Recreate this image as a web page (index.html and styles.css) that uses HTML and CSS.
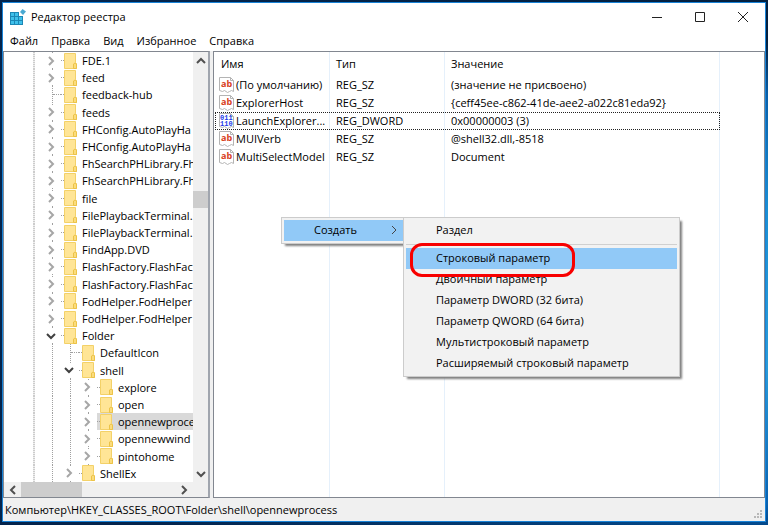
FILE: index.html
```html
<!DOCTYPE html>
<html lang="ru">
<head>
    <meta charset="UTF-8">
    <meta name="viewport" content="width=device-width, initial-scale=1.0">
    <title>Редактор реестра</title>
    <link rel="stylesheet" href="styles.css">
</head>
<body>
    <svg class="sprite" aria-hidden="true">
        <symbol id="folder" viewBox="0 0 13 16">
            <path d="M.5 .5h11v9l1 1v5H.5z" fill="#ffe596" stroke="#f3d168"/>
            <path d="M9.500 15.500v-4.500l1.500-1 1.500 1v4.500z" fill="#fbdc7c" stroke="#ecc348"/>
        </symbol>
        <symbol id="right" viewBox="0 0 10 10">
            <path d="M3 1l4 4-4 4" fill="none" stroke="currentColor"/>
        </symbol>
        <symbol id="down" viewBox="0 0 10 10">
            <path d="M1 3l4 4 4-4" fill="none" stroke="currentColor"/>
        </symbol>
        <symbol id="left" viewBox="0 0 10 10">
            <path d="M7 1L3 5l4 4" fill="none" stroke="currentColor"/>
        </symbol>
        <symbol id="up" viewBox="0 0 10 10">
            <path d="M1 7l4-4 4 4" fill="none" stroke="currentColor"/>
        </symbol>
        <symbol id="page" viewBox="0 0 16 16">
            <path d="M.5 .5h11l3 3v11l-2-1-2 1-2 1-3-2-2 1-3-1z" fill="#fff" stroke="#b4b4b4"/>
            <path d="M11.500 .5v3h3" fill="none" stroke="#b4b4b4"/>
        </symbol>
    </svg>

    <div class="window">
        <header class="title-bar">
            <svg class="app-icon" viewBox="0 0 16 16" aria-hidden="true">
                <path d="M0 3h9v4h4v9H0z" fill="#1c87b5"/>
                <path d="M1 4h3v3H1zM5 4h3v3H5zM1 8h3v3H1zM5 8h3v3H5zM9 8h3v3H9zM1 12h3v3H1zM5 12h3v3H5zM9 12h3v3H9z" fill="#3fc0ea"/>
                <path d="M12.500 0L16 2.500 13 6 10 3z" fill="#4aa9d2"/>
            </svg>
            <h1>Редактор реестра</h1>
            <div class="window-buttons">
                <button aria-label="Свернуть"><svg viewBox="0 0 12 12"><path d="M1 6.500h10"/></svg></button>
                <button aria-label="Развернуть"><svg viewBox="0 0 12 12"><path d="M1.500 1.500h9v9h-9z"/></svg></button>
                <button aria-label="Закрыть"><svg viewBox="0 0 12 12"><path d="M1 1l10 10M11 1L1 11"/></svg></button>
            </div>
        </header>

        <nav class="menu-bar">
            <button>Файл</button>
            <button>Правка</button>
            <button>Вид</button>
            <button>Избранное</button>
            <button>Справка</button>
        </nav>

        <main>
            <section class="tree-pane">
                <ul class="tree">
                    <li class="level1"><button class="toggle" aria-label="Развернуть"><svg><use href="#right"/></svg></button><span class="node"><svg><use href="#folder"/></svg>FDE.1</span></li>
                    <li class="level1"><button class="toggle" aria-label="Развернуть"><svg><use href="#right"/></svg></button><span class="node"><svg><use href="#folder"/></svg>feed</span></li>
                    <li class="level1"><span class="leaf"></span><span class="node"><svg><use href="#folder"/></svg>feedback-hub</span></li>
                    <li class="level1"><button class="toggle" aria-label="Развернуть"><svg><use href="#right"/></svg></button><span class="node"><svg><use href="#folder"/></svg>feeds</span></li>
                    <li class="level1"><button class="toggle" aria-label="Развернуть"><svg><use href="#right"/></svg></button><span class="node"><svg><use href="#folder"/></svg>FHConfig.AutoPlayHa</span></li>
                    <li class="level1"><button class="toggle" aria-label="Развернуть"><svg><use href="#right"/></svg></button><span class="node"><svg><use href="#folder"/></svg>FHConfig.AutoPlayHa</span></li>
                    <li class="level1"><button class="toggle" aria-label="Развернуть"><svg><use href="#right"/></svg></button><span class="node"><svg><use href="#folder"/></svg>FhSearchPHLibrary.Fh</span></li>
                    <li class="level1"><button class="toggle" aria-label="Развернуть"><svg><use href="#right"/></svg></button><span class="node"><svg><use href="#folder"/></svg>FhSearchPHLibrary.Fh</span></li>
                    <li class="level1"><button class="toggle" aria-label="Развернуть"><svg><use href="#right"/></svg></button><span class="node"><svg><use href="#folder"/></svg>file</span></li>
                    <li class="level1"><button class="toggle" aria-label="Развернуть"><svg><use href="#right"/></svg></button><span class="node"><svg><use href="#folder"/></svg>FilePlaybackTerminal.</span></li>
                    <li class="level1"><button class="toggle" aria-label="Развернуть"><svg><use href="#right"/></svg></button><span class="node"><svg><use href="#folder"/></svg>FilePlaybackTerminal.</span></li>
                    <li class="level1"><button class="toggle" aria-label="Развернуть"><svg><use href="#right"/></svg></button><span class="node"><svg><use href="#folder"/></svg>FindApp.DVD</span></li>
                    <li class="level1"><button class="toggle" aria-label="Развернуть"><svg><use href="#right"/></svg></button><span class="node"><svg><use href="#folder"/></svg>FlashFactory.FlashFac</span></li>
                    <li class="level1"><button class="toggle" aria-label="Развернуть"><svg><use href="#right"/></svg></button><span class="node"><svg><use href="#folder"/></svg>FlashFactory.FlashFac</span></li>
                    <li class="level1"><button class="toggle" aria-label="Развернуть"><svg><use href="#right"/></svg></button><span class="node"><svg><use href="#folder"/></svg>FodHelper.FodHelper</span></li>
                    <li class="level1"><button class="toggle" aria-label="Развернуть"><svg><use href="#right"/></svg></button><span class="node"><svg><use href="#folder"/></svg>FodHelper.FodHelper</span></li>
                    <li class="level1"><button class="toggle open" aria-label="Свернуть"><svg><use href="#down"/></svg></button><span class="node"><svg><use href="#folder"/></svg>Folder</span></li>
                    <li class="level2"><span class="leaf"></span><span class="node"><svg><use href="#folder"/></svg>DefaultIcon</span></li>
                    <li class="level2"><button class="toggle open" aria-label="Свернуть"><svg><use href="#down"/></svg></button><span class="node"><svg><use href="#folder"/></svg>shell</span></li>
                    <li class="level3"><button class="toggle" aria-label="Развернуть"><svg><use href="#right"/></svg></button><span class="node"><svg><use href="#folder"/></svg>explore</span></li>
                    <li class="level3"><button class="toggle" aria-label="Развернуть"><svg><use href="#right"/></svg></button><span class="node"><svg><use href="#folder"/></svg>open</span></li>
                    <li class="level3"><button class="toggle" aria-label="Развернуть"><svg><use href="#right"/></svg></button><span class="node selected"><svg><use href="#folder"/></svg>opennewproce</span></li>
                    <li class="level3"><button class="toggle" aria-label="Развернуть"><svg><use href="#right"/></svg></button><span class="node"><svg><use href="#folder"/></svg>opennewwind</span></li>
                    <li class="level3"><button class="toggle" aria-label="Развернуть"><svg><use href="#right"/></svg></button><span class="node"><svg><use href="#folder"/></svg>pintohome</span></li>
                    <li class="level2"><button class="toggle" aria-label="Развернуть"><svg><use href="#right"/></svg></button><span class="node"><svg><use href="#folder"/></svg>ShellEx</span></li>
                </ul>
                <div class="scroll-y">
                    <button aria-label="Вверх"><svg><use href="#up"/></svg></button>
                    <span></span>
                    <span class="thumb"></span>
                    <span></span>
                    <button aria-label="Вниз"><svg><use href="#down"/></svg></button>
                </div>
                <div class="scroll-x">
                    <button aria-label="Влево"><svg><use href="#left"/></svg></button>
                    <span class="thumb"></span>
                    <span></span>
                    <button aria-label="Вправо"><svg><use href="#right"/></svg></button>
                </div>
            </section>

            <section class="list-pane">
                <table>
                    <colgroup>
                        <col class="col-name">
                        <col class="col-type">
                        <col class="col-value">
                    </colgroup>
                    <thead>
                        <tr><th>Имя</th><th>Тип</th><th>Значение</th></tr>
                    </thead>
                    <tbody>
                        <tr>
                            <td><span class="name"><svg viewBox="0 0 16 16"><use href="#page"/><text class="ab" x="2" y="10">ab</text></svg>(По умолчанию)</span></td>
                            <td>REG_SZ</td><td>(значение не присвоено)</td>
                        </tr>
                        <tr>
                            <td><span class="name"><svg viewBox="0 0 16 16"><use href="#page"/><text class="ab" x="2" y="10">ab</text></svg>ExplorerHost</span></td>
                            <td>REG_SZ</td><td>{ceff45ee-c862-41de-aee2-a022c81eda92}</td>
                        </tr>
                        <tr class="focused">
                            <td><span class="name"><svg viewBox="0 0 16 16"><use href="#page"/><text class="bin" x="1" y="7">011</text><text class="bin" x="1" y="13">110</text></svg>LaunchExplorer...</span></td>
                            <td>REG_DWORD</td><td>0x00000003 (3)</td>
                        </tr>
                        <tr>
                            <td><span class="name"><svg viewBox="0 0 16 16"><use href="#page"/><text class="ab" x="2" y="10">ab</text></svg>MUIVerb</span></td>
                            <td>REG_SZ</td><td>@shell32.dll,-8518</td>
                        </tr>
                        <tr>
                            <td><span class="name"><svg viewBox="0 0 16 16"><use href="#page"/><text class="ab" x="2" y="10">ab</text></svg>MultiSelectModel</span></td>
                            <td>REG_SZ</td><td>Document</td>
                        </tr>
                    </tbody>
                </table>
            </section>
        </main>

        <footer>
            <span>Компьютер\HKEY_CLASSES_ROOT\Folder\shell\opennewprocess</span>
            <svg class="grip" viewBox="0 0 9 9" aria-hidden="true">
                <path d="M6 0h2v2H6zM3 3h2v2H3zM6 3h2v2H6zM0 6h2v2H0zM3 6h2v2H3zM6 6h2v2H6z" fill="#b8b8b8"/>
            </svg>
        </footer>
    </div>

    <div class="popup context-menu">
        <button class="active">Создать<svg><use href="#right"/></svg></button>
    </div>
    <div class="popup submenu">
        <button>Раздел</button>
        <hr>
        <button class="active">Строковый параметр</button>
        <button>Двоичный параметр</button>
        <button>Параметр DWORD (32 бита)</button>
        <button>Параметр QWORD (64 бита)</button>
        <button>Мультистроковый параметр</button>
        <button>Расширяемый строковый параметр</button>
    </div>
    <div class="highlight"></div>
</body>
</html>
```
FILE: styles.css
```css
* {
    box-sizing: border-box;
}
body {
    --dots: repeating-linear-gradient(#a0a0a0 0 1px, transparent 1px 2px);
    --dots-light: repeating-linear-gradient(#ccc 0 1px, #eee 1px 2px);
    margin: 0;
    padding: 2px 2px 3px;
    height: 100vh;
    overflow: hidden;
    font-family: "Open Sans", "Noto Sans", sans-serif;
    font-size: 11px;
    color: #000;
    background: linear-gradient(90deg, #04244c 20%, transparent 95%), linear-gradient(#04203f 8%, #0a5fa8 18%, #1b8fd2 40%, #2a9bd8 70%, #0a62b0 96%, #03488a);
}
button {
    margin: 0;
    padding: 0;
    border: none;
    background: none;
    font: inherit;
    color: inherit;
}
svg {
    display: block;
    flex: none;
    width: 10px;
    height: 10px;
}
.sprite {
    position: absolute;
    width: 0;
    height: 0;
}
.window {
    display: flex;
    flex-direction: column;
    height: 100%;
    border: 1px solid #1883d7;
    background-color: #fff;
}

/* title and menu */
.title-bar {
    display: flex;
    align-items: center;
    height: 28px;
    padding: 0 1px 0 7px;
}
.app-icon {
    width: 16px;
    height: 16px;
}
.title-bar h1 {
    flex: 1;
    margin: 0 0 0 5px;
    padding-bottom: 2px;
    font-size: 11px;
    font-weight: normal;
}
.window-buttons {
    display: flex;
}
.window-buttons button {
    display: flex;
    align-items: center;
    justify-content: center;
    width: 43px;
    height: 28px;
}
.window-buttons svg {
    width: 12px;
    height: 12px;
    fill: none;
    stroke: #222;
}
.menu-bar {
    display: flex;
    gap: 13px;
    height: 20px;
    padding-left: 7px;
}
.menu-bar button {
    padding-bottom: 2px;
}

/* panes */
main {
    flex: 1;
    display: flex;
    gap: 3px;
    min-height: 0;
    background-color: #f0f0f0;
}
.tree-pane {
    display: grid;
    grid-template: minmax(0, 1fr) 15px / minmax(0, 1fr) 15px;
    flex: none;
    width: 207px;
    border: 1px solid #828790;
    border-right: 2px solid #a0a5ae;
    background-color: #f0f0f0;
}
.tree {
    display: grid;
    grid-auto-rows: minmax(0, 1fr);
    margin: 0;
    padding: 0;
    list-style: none;
    background-color: #fff;
}
.tree li {
    display: flex;
    min-width: 0;
    background-repeat: no-repeat;
}
.level1 {
    padding-left: 39px;
    background-image: var(--dots-light), var(--dots);
    background-position: 29px 0, 48px 0;
    background-size: 2px 100%, 1px 100%;
}
.level2 {
    padding-left: 57px;
    background-image: var(--dots-light), var(--dots), var(--dots);
    background-position: 29px 0, 48px 0, 66px 0;
    background-size: 2px 100%, 1px 100%, 1px 100%;
}
.level3 {
    padding-left: 75px;
    background-image: var(--dots-light), var(--dots), var(--dots), var(--dots);
    background-position: 29px 0, 48px 0, 66px 0, 84px 0;
    background-size: 2px 100%, 1px 100%, 1px 100%, 1px 100%;
}
.toggle {
    display: flex;
    align-items: center;
    justify-content: center;
    align-self: center;
    width: 16px;
    height: 14px;
    margin-right: 2px;
    color: #a6a6a6;
    background-color: #fff;
}
.toggle svg, .scroll-x svg, .scroll-y svg {
    stroke-width: 2px;
}
.toggle.open {
    color: #404040;
}
.leaf {
    align-self: center;
    width: 8px;
    margin-left: 10px;
    border-top: 1px dotted #a0a0a0;
}
.node {
    display: flex;
    align-items: center;
    flex: 1;
    min-width: 0;
    overflow: hidden;
    white-space: nowrap;
}
.node::before {
    content: "";
    width: 3px;
    border-top: 1px dotted #a0a0a0;
    flex: none;
}
.node svg {
    width: 13px;
    height: 16px;
    margin-right: 5px;
}
.node.selected {
    background-color: #d9d9d9;
}
.scroll-y {
    display: grid;
    grid-template-rows: 17px 122fr 17px 257fr 17px;
}
.scroll-x {
    display: grid;
    grid-template-columns: 17px 61fr 93fr 17px;
}
.scroll-x button, .scroll-y button {
    display: flex;
    align-items: center;
    justify-content: center;
    color: #505050;
}
.thumb {
    background-color: #cdcdcd;
}

/* values */
.list-pane {
    flex: 1;
    min-width: 0;
    padding-left: 1px;
    border: 1px solid #828790;
    background: linear-gradient(90deg, transparent 115px, #e5f0fb 115px 116px, transparent 116px 230px, #e5f0fb 230px 231px, transparent 231px 505px, #e5f0fb 505px 506px, transparent 506px) #fff;
}
table {
    width: 505px;
    table-layout: fixed;
    border-collapse: collapse;
}
.col-name, .col-type {
    width: 115px;
}
.col-value {
    width: 275px;
}
th, td {
    height: 18px;
    padding: 0 5px 0 6px;
    font-weight: normal;
    line-height: 16px;
    text-align: left;
    white-space: nowrap;
}
th {
    height: 24px;
}
td:first-child {
    padding: 0 0 0 4px;
}
.name {
    display: flex;
    align-items: center;
    gap: 1px;
}
.name svg {
    width: 16px;
    height: 16px;
}
.ab {
    font: bold 9px "Open Sans", sans-serif;
    fill: #d8401c;
}
.bin {
    font: bold 7px "Liberation Mono", monospace;
    fill: #2038e8;
}
.focused {
    outline: 1px dotted #222;
    outline-offset: -1px;
}

footer {
    display: flex;
    align-items: center;
    justify-content: space-between;
    height: 23px;
    padding-left: 2px;
    background-color: #f0f0f0;
}
.grip {
    align-self: flex-end;
    width: 9px;
    height: 9px;
    margin: 2px;
}

/* popups */
.popup {
    position: absolute;
    top: 217px;
    padding: 2px;
    border: 1px solid #ccc;
    background-color: #f2f2f2;
    box-shadow: 3px 3px 2px -1px #808080;
}
.popup button {
    display: flex;
    align-items: center;
    justify-content: space-between;
    width: 100%;
    height: 21px;
    padding: 0 4px 2px 30px;
    white-space: nowrap;
}
.popup .active {
    background-color: #91c9f7;
}
.popup hr {
    height: 1px;
    margin: 3px 0;
    border: none;
    background-color: #d0d0d0;
}
.context-menu {
    left: 281px;
    width: 123px;
    padding-right: 0;
}
.context-menu svg {
    color: #444;
}
.submenu {
    left: 403px;
    width: 277px;
}
.highlight {
    position: absolute;
    top: 243px;
    left: 410px;
    width: 165px;
    height: 34px;
    border: 3px solid #f80000;
    border-radius: 12px;
    pointer-events: none;
}
```
